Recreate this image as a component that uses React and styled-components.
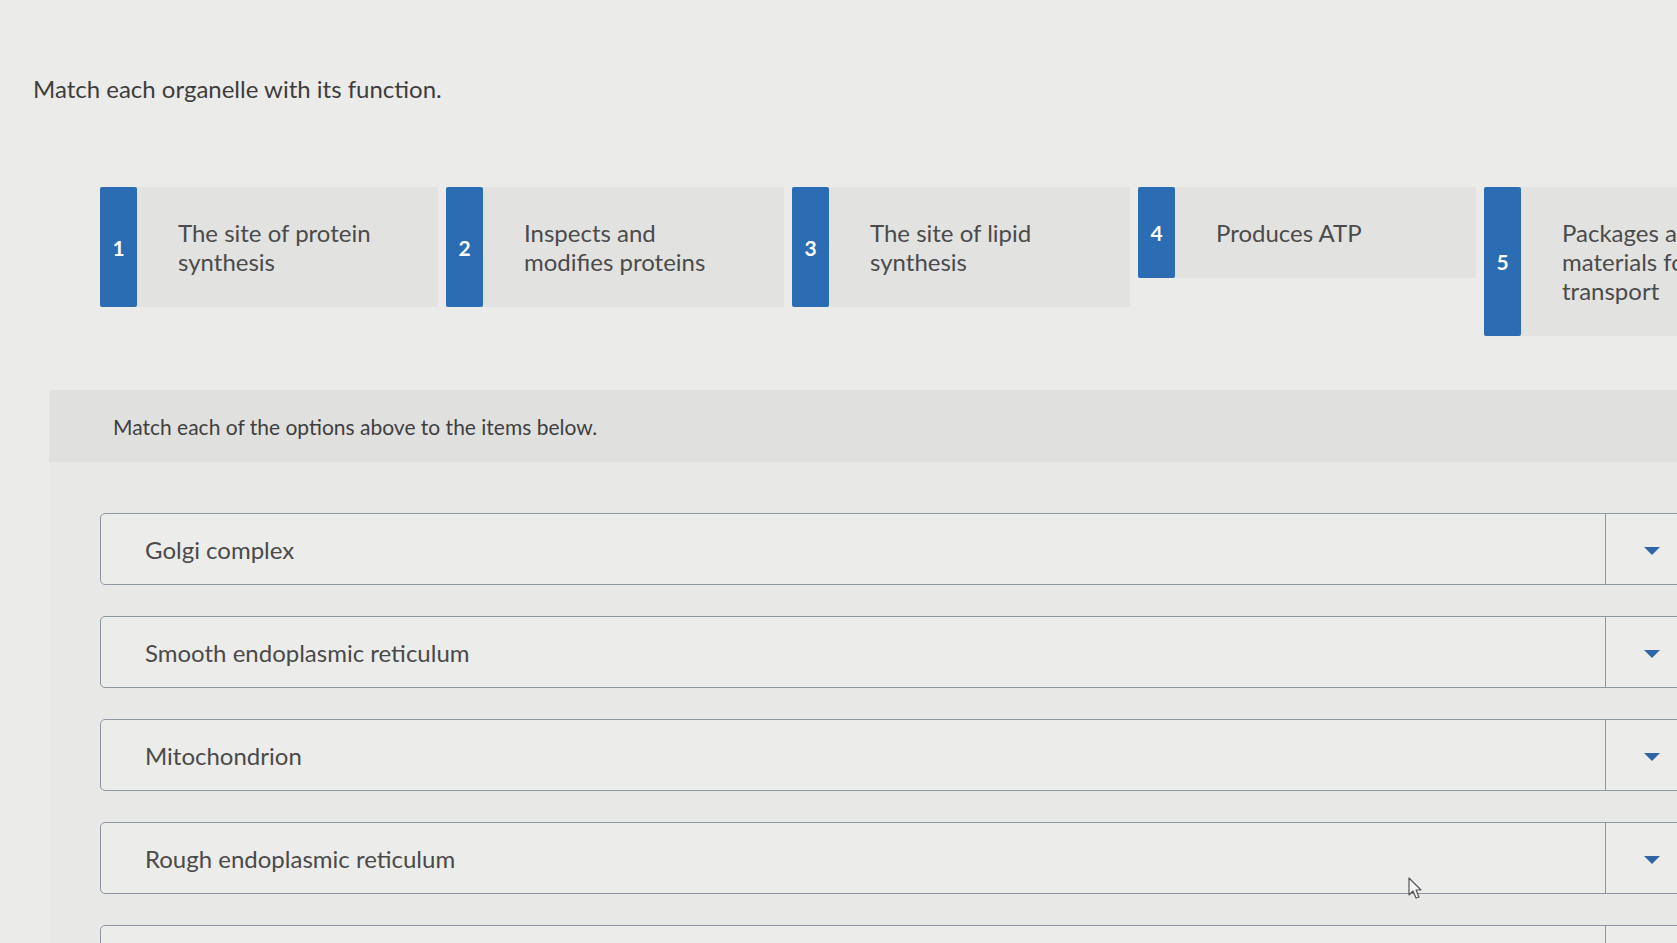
import React from "react";
import styled, { createGlobalStyle } from "styled-components";

const GlobalStyle = createGlobalStyle`
  html, body {
    margin: 0;
    padding: 0;
    background: #ebebe9;
    overflow: hidden;
  }
  body {
    font-family: Lato, "Open Sans", "Liberation Sans", sans-serif;
    color: #474747;
  }
  * {
    box-sizing: border-box;
  }
`;

const Page = styled.div`
  position: relative;
  width: 1677px;
  height: 943px;
  overflow: hidden;
`;

const Title = styled.h1`
  margin: 0;
  padding: 74px 0 0 33px;
  font-size: 24px;
  line-height: 30px;
  font-weight: 400;
  color: #3d3d3d;
`;

const Choices = styled.div`
  display: flex;
  align-items: flex-start;
  gap: 8px;
  margin: 83px 0 0 100px;
  width: max-content;
`;

const Choice = styled.div`
  display: flex;
  width: 338px;
  background: #e2e2e1;
`;

const Badge = styled.div`
  flex: 0 0 37px;
  display: flex;
  align-items: center;
  justify-content: center;
  background: #2b6cb3;
  border-radius: 2px;
  color: #fff;
  font-size: 21px;
  font-weight: 700;
`;

const ChoiceText = styled.p`
  margin: 0;
  padding: 31px 0 31px 41px;
  width: 256px;
  font-size: 24px;
  line-height: 29px;
  color: #4b4b4b;
`;

const Panel = styled.section`
  margin: 54px 0 0 49px;
  width: 1700px;
  height: 600px;
  background: #e8e8e7;
`;

const PanelHeader = styled.div`
  height: 72px;
  display: flex;
  align-items: center;
  padding-left: 64px;
  background: #e0e0df;
  font-size: 21px;
  color: #3f3f3f;
`;

const Rows = styled.div`
  display: flex;
  flex-direction: column;
  gap: 31px;
  padding: 51px 0 0 51px;
`;

const Row = styled.div`
  display: flex;
  width: 1598px;
  height: 72px;
  background: #ececeb;
  border: 1.5px solid #8d97a4;
  border-radius: 5px;
`;

const RowLabel = styled.div`
  flex: 1;
  display: flex;
  align-items: center;
  padding-left: 44px;
  font-size: 24px;
  color: #4a4a4a;
`;

const Toggle = styled.div`
  flex: 0 0 92px;
  display: flex;
  align-items: center;
  justify-content: center;
  border-left: 1.5px solid #8d97a4;
`;

const Caret = styled.span`
  width: 0;
  height: 0;
  border-left: 8px solid transparent;
  border-right: 8px solid transparent;
  border-top: 8px solid #2e65a6;
  margin-top: 4px;
`;

const Cursor = styled.svg`
  position: absolute;
  left: 1408px;
  top: 877px;
`;

const choices = [
  "The site of protein synthesis",
  "Inspects and modifies proteins",
  "The site of lipid synthesis",
  "Produces ATP",
  "Packages and materials for transport",
];

const items = [
  "Golgi complex",
  "Smooth endoplasmic reticulum",
  "Mitochondrion",
  "Rough endoplasmic reticulum",
  "",
];

const App = () => {
  return (
    <Page>
      <GlobalStyle />
      <Title>Match each organelle with its function.</Title>
      <Choices>
        {choices.map((text, i) => (
          <Choice key={i}>
            <Badge>{i + 1}</Badge>
            <ChoiceText>{text}</ChoiceText>
          </Choice>
        ))}
      </Choices>
      <Panel>
        <PanelHeader>Match each of the options above to the items below.</PanelHeader>
        <Rows>
          {items.map((label, i) => (
            <Row key={i}>
              <RowLabel>{label}</RowLabel>
              <Toggle>
                <Caret />
              </Toggle>
            </Row>
          ))}
        </Rows>
      </Panel>
      <Cursor width="16" height="24" viewBox="0 0 16 24">
        <path
          d="M1 1 L1 18 L5 14 L8 21 L11 20 L8 13 L13 13 Z"
          fill="#f4f4f4"
          stroke="#555"
          strokeWidth="1.2"
          strokeLinejoin="round"
        />
      </Cursor>
    </Page>
  );
};

export default App;
